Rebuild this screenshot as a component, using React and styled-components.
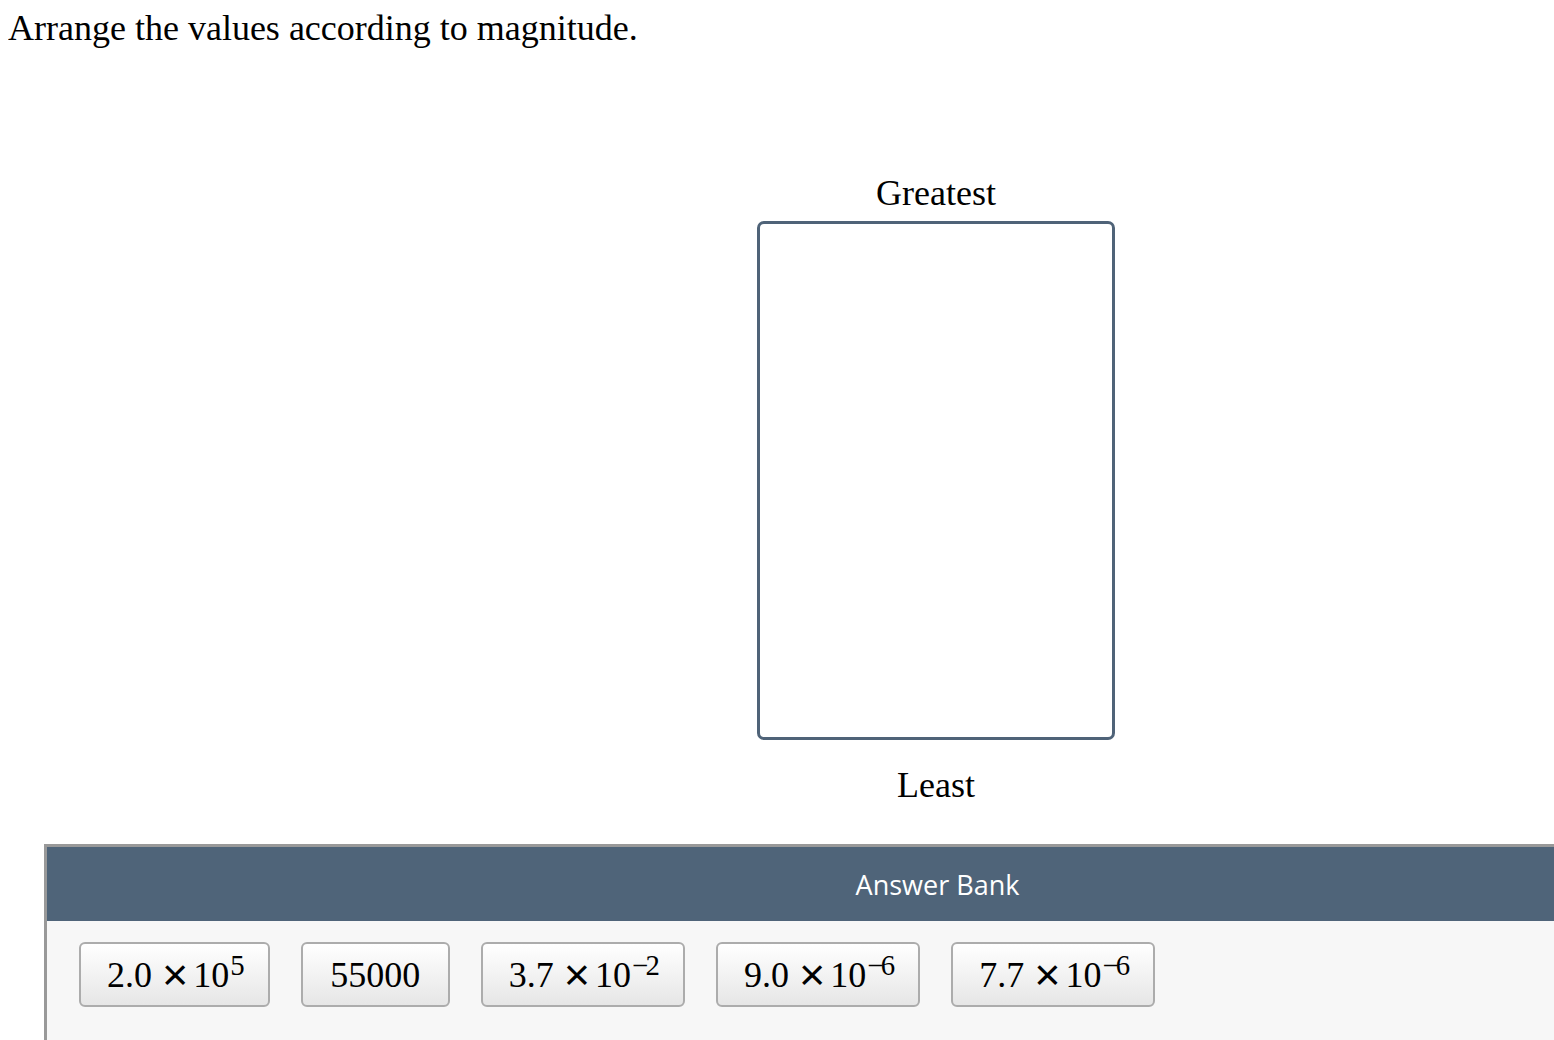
import React from 'react'
import styled, { createGlobalStyle } from 'styled-components';

const GlobalStyle = createGlobalStyle`
    body {
        margin: 8px 0 0 8px;
        background: #fff;
        font-family: "Liberation Serif", "Times New Roman", serif;
        color: #000;
    }
`;

// the question is laid out wider than the window, so it is clipped on the right
const Viewport = styled.div`
    overflow: hidden;
    height: 1032px;
`;

const Page = styled.div`
    width: 1856px;
`;

const Prompt = styled.h1`
    margin: 0;
    font-size: 36px;
    line-height: 40px;
    font-weight: normal;
`;

const Sorter = styled.div`
    display: flex;
    flex-direction: column;
    align-items: center;
    margin-top: 125px;
`;

const Label = styled.div`
    font-size: 36px;
    line-height: 40px;
    margin-top: ${props => props.gap || 0}px;
`;

const DropZone = styled.div`
    box-sizing: border-box;
    width: 358px;
    height: 519px;
    margin-top: 8px;
    border: 3px solid #4f6378;
    border-radius: 7px;
    background: #fff;
`;

const Bank = styled.div`
    margin: 39px 36px 0;
    border-top: 3px solid #999;
    border-left: 3px solid #999;
    background: #f7f7f7;
    min-height: 200px;
`;

const BankHeader = styled.div`
    height: 74px;
    display: flex;
    align-items: center;
    justify-content: center;
    background: #4f6479;
    color: #fff;
    font-family: "Open Sans", "Noto Sans", sans-serif;
    font-size: 27px;
    padding-top: 1px;
    box-sizing: border-box;
`;

const TileRow = styled.div`
    display: flex;
    gap: 31px;
    padding: 21px 32px;
`;

const Tile = styled.div`
    box-sizing: border-box;
    height: 65px;
    min-width: 149px;
    padding: 0 26px;
    display: flex;
    align-items: center;
    justify-content: center;
    border: 2px solid #acacac;
    border-radius: 6px;
    background: linear-gradient(#ffffff, #e6e6e6);
    font-size: 36px;
    line-height: 40px;
    white-space: nowrap;
    cursor: grab;
`;

const Times = styled.span`
    font-family: "Liberation Sans", Arial, sans-serif;
    font-size: 45px;
    line-height: 0;
    vertical-align: -3px;
    margin: 0 5px 0 10px;
`;

const Sup = styled.sup`
    font-size: 0.8em;
    vertical-align: 12px;
    line-height: 0;
    letter-spacing: -0.1em;
    margin-left: 1px;
`;

const values = [
    { base: '2.0', exp: '5' },
    { plain: '55000' },
    { base: '3.7', exp: '\u22122' },
    { base: '9.0', exp: '\u22126' },
    { base: '7.7', exp: '\u22126' },
];

const App = () => {
    return (
        <Viewport>
            <GlobalStyle />
            <Page>
                <Prompt>Arrange the values according to magnitude.</Prompt>
                <Sorter>
                    <Label>Greatest</Label>
                    <DropZone />
                    <Label gap={25}>Least</Label>
                </Sorter>
                <Bank>
                    <BankHeader>Answer Bank</BankHeader>
                    <TileRow>
                        {values.map((v, i) => (
                            <Tile key={i} draggable={true}>
                                {v.plain ? v.plain : (
                                    <span>{v.base}<Times>×</Times>10<Sup>{v.exp}</Sup></span>
                                )}
                            </Tile>
                        ))}
                    </TileRow>
                </Bank>
            </Page>
        </Viewport>
    )
}

export default App
